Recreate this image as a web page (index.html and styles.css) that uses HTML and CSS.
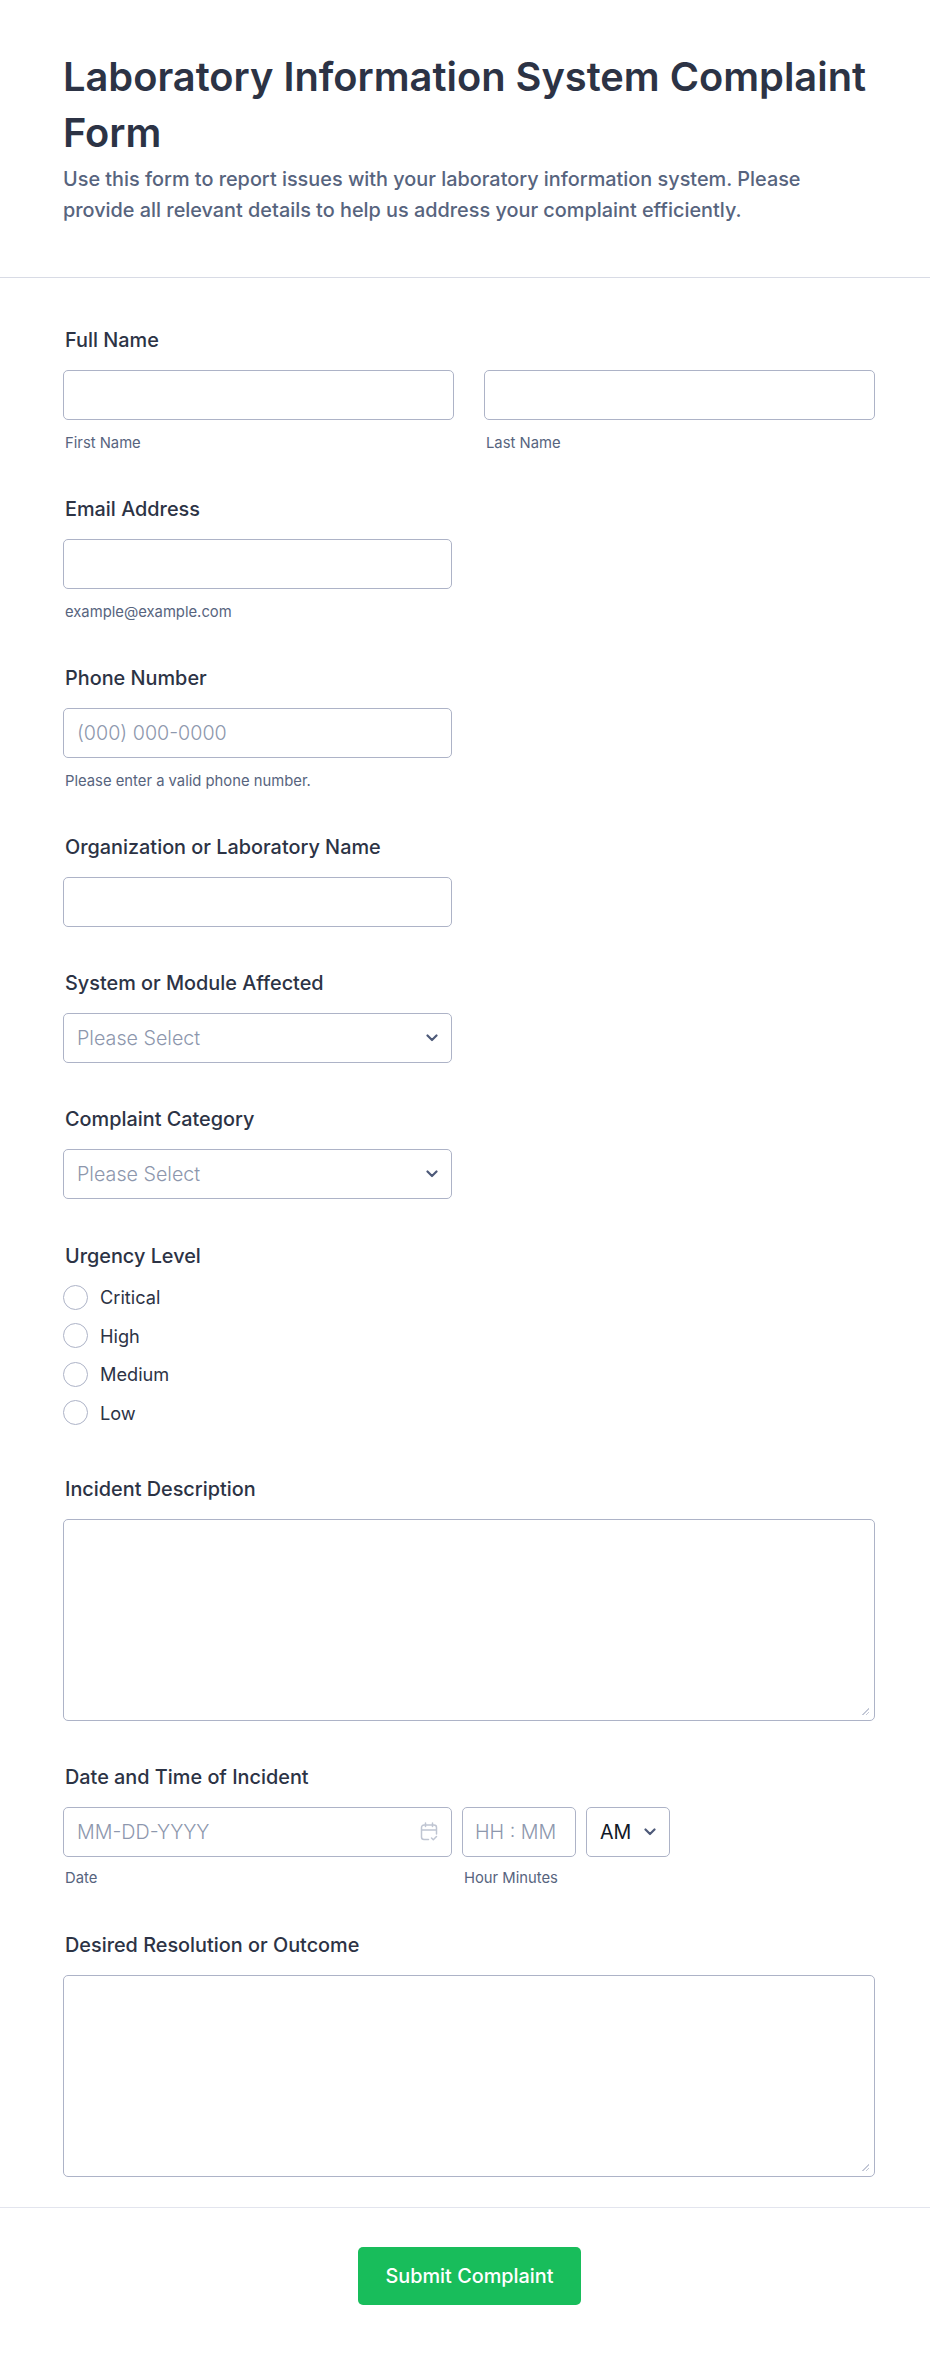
FILE: index.html
```html
<!DOCTYPE html>
<html lang="en">
  <head>
    <meta charset="UTF-8" />
    <meta name="viewport" content="width=device-width, initial-scale=1.0" />
    <title>Laboratory Information System Complaint Form</title>
    <link rel="stylesheet" href="styles.css">
  </head>
  <body>
    <header class="form-header">
      <h1>Laboratory Information System Complaint Form</h1>
      <p>Use this form to report issues with your laboratory information system. Please provide all relevant details to help us address your complaint efficiently.</p>
    </header>

    <form class="form-body">
      <div class="field">
        <label class="field-label">Full Name</label>
        <div class="name-row">
          <div>
            <input class="input" type="text">
            <span class="sublabel">First Name</span>
          </div>
          <div>
            <input class="input" type="text">
            <span class="sublabel">Last Name</span>
          </div>
        </div>
      </div>

      <div class="field half">
        <label class="field-label">Email Address</label>
        <input class="input" type="text">
        <span class="sublabel">example@example.com</span>
      </div>

      <div class="field half">
        <label class="field-label">Phone Number</label>
        <input class="input" type="text" placeholder="(000) 000-0000">
        <span class="sublabel">Please enter a valid phone number.</span>
      </div>

      <div class="field half">
        <label class="field-label">Organization or Laboratory Name</label>
        <input class="input" type="text">
      </div>

      <div class="field half">
        <label class="field-label">System or Module Affected</label>
        <div class="select">
          <span>Please Select</span>
          <svg class="chevron" viewBox="0 0 12 8"><path d="M1.5 1.5 6 6l4.5-4.5" /></svg>
        </div>
      </div>

      <div class="field half">
        <label class="field-label">Complaint Category</label>
        <div class="select">
          <span>Please Select</span>
          <svg class="chevron" viewBox="0 0 12 8"><path d="M1.5 1.5 6 6l4.5-4.5" /></svg>
        </div>
      </div>

      <div class="field field-radio">
        <label class="field-label">Urgency Level</label>
        <div class="radio-list">
          <div class="radio"><span class="circle"></span>Critical</div>
          <div class="radio"><span class="circle"></span>High</div>
          <div class="radio"><span class="circle"></span>Medium</div>
          <div class="radio"><span class="circle"></span>Low</div>
        </div>
      </div>

      <div class="field">
        <label class="field-label">Incident Description</label>
        <textarea class="textarea"></textarea>
      </div>

      <div class="field field-date">
        <label class="field-label">Date and Time of Incident</label>
        <div class="date-row">
          <div class="date-col">
            <div class="input date-box">
              <span>MM-DD-YYYY</span>
              <svg class="calendar" viewBox="0 0 18 20">
                <path d="M8.500 17.500H4A2.500 2.500 0 0 1 1.500 15V5.500A2.500 2.500 0 0 1 4 3h10a2.500 2.500 0 0 1 2.500 2.500V12M1.500 8h15M5.500 1v3.500M12.500 1v3.500M11.500 16l1.800 1.800 3.200-3.300" />
              </svg>
            </div>
            <span class="sublabel">Date</span>
          </div>
          <div class="time-col">
            <div class="input time-box">HH : MM</div>
            <span class="sublabel">Hour Minutes</span>
          </div>
          <div class="ampm">
            AM
            <svg class="chevron" viewBox="0 0 12 8"><path d="M1.5 1.5 6 6l4.500-4.500" /></svg>
          </div>
        </div>
      </div>

      <div class="field last">
        <label class="field-label">Desired Resolution or Outcome</label>
        <textarea class="textarea"></textarea>
      </div>
    </form>

    <footer class="form-footer">
      <button class="submit" type="button">Submit Complaint</button>
    </footer>
  </body>
</html>
```

FILE: styles.css
```css
* {
  box-sizing: border-box;
}
body {
  margin: 0;
  background: #fff;
  color: #2c3345;
  font-family: Inter, "Liberation Sans", sans-serif;
}

/* header */
.form-header {
  padding: 49px 55px 51px 63px;
  border-bottom: 1px solid #d8dbe5;
}
.form-header h1 {
  margin: 0 0 3px;
  font-size: 39.8px;
  line-height: 56px;
  font-weight: 600;
}
.form-header p {
  margin: 0;
  padding-right: 60px;
  font-size: 19.85px;
  line-height: 31px;
  font-weight: 500;
  color: #57647e;
}

/* fields */
.form-body {
  padding: 49px 55px 0 63px;
}
.field {
  margin-bottom: 43px;
}
.field.half {
  width: 389px;
}
.field.field-radio {
  margin-top: 44px;
  margin-bottom: 51px;
}
.field.field-date {
  margin-bottom: 44px;
}
.field.last {
  margin-bottom: 0;
}
.field-label {
  display: block;
  height: 27px;
  margin-bottom: 16px;
  padding-left: 2px;
  font-size: 19.85px;
  line-height: 27px;
  font-weight: 500;
}
.field-radio .field-label {
  margin-bottom: 15px;
}
.name-row {
  display: grid;
  grid-template-columns: 391px 391px;
  gap: 30px;
}
.input,
.select,
.ampm {
  display: flex;
  align-items: center;
  width: 100%;
  height: 50px;
  padding: 0 13px;
  border: 1px solid #adb3c7;
  border-radius: 5px;
  background: #fff;
  font-family: inherit;
  font-size: 19.7px;
  font-weight: 300;
  color: #8d97ad;
}
.input::placeholder {
  color: #8d97ad;
  opacity: 1;
}
.select {
  justify-content: space-between;
}
.chevron {
  width: 12px;
  height: 8px;
  fill: none;
  stroke: #4e5a79;
  stroke-width: 2.2;
  stroke-linecap: round;
  stroke-linejoin: round;
}
.sublabel {
  display: block;
  height: 20px;
  margin-top: 13px;
  padding-left: 2px;
  font-size: 14.8px;
  line-height: 20px;
  color: #57647e;
}

/* radios */
.radio-list {
  display: flex;
  flex-direction: column;
  gap: 14.500px;
}
.radio {
  display: flex;
  align-items: center;
  gap: 12px;
  height: 24px;
  font-size: 18.2px;
}
.circle {
  width: 25px;
  height: 25px;
  border: 1px solid #adb3c7;
  border-radius: 50%;
}

.textarea {
  display: block;
  width: 812px;
  height: 202px;
  border: 1px solid #adb3c7;
  border-radius: 5px;
  background: #fff;
  font-family: inherit;
  font-size: 18px;
}
/* two short strokes instead of the native grip */
.textarea::-webkit-resizer {
  background: linear-gradient(135deg, transparent 9.1px, #c3c8d6 9.1px 10.1px, transparent 10.1px 11.7px, #c3c8d6 11.7px 12.7px, transparent 12.7px) 0 0 / 10px 10px no-repeat;
}

/* date row */
.date-row {
  display: flex;
  gap: 10px;
  margin-top: 1px;
}
.date-row .sublabel {
  margin-top: 11px;
}
.date-col {
  width: 389px;
}
.date-box {
  justify-content: space-between;
}
.calendar {
  width: 18px;
  height: 20px;
  fill: none;
  stroke: #bfc5d2;
  stroke-width: 1.5;
  stroke-linecap: round;
  stroke-linejoin: round;
}
.time-col {
  width: 114px;
}
.time-box {
  padding: 0 12px;
}
.ampm {
  justify-content: space-between;
  width: 84px;
  padding: 0 13px;
  color: #111827;
  font-weight: 400;
}

/* footer */
.form-footer {
  display: flex;
  justify-content: center;
  height: 147px;
  margin-top: 30px;
  padding: 39px 0 0 9px;
  border-top: 1px solid #e3e5ee;
}
.submit {
  width: 223px;
  height: 58px;
  border: 0;
  border-radius: 5px;
  background: #18bd5b;
  color: #fff;
  font-family: inherit;
  font-size: 19.85px;
  font-weight: 500;
}
```
